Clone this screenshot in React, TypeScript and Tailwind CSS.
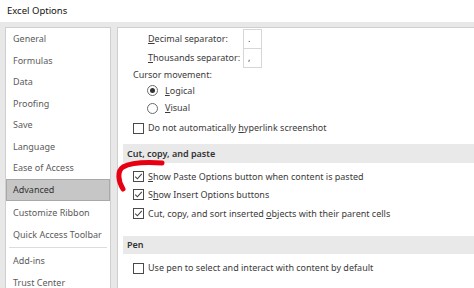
import type { JSX } from "react";

const font = { fontFamily: '"Segoe UI", "Noto Sans", "Open Sans", sans-serif' };

const navItems = [
    "General",
    "Formulas",
    "Data",
    "Proofing",
    "Save",
    "Language",
    "Ease of Access",
    "Advanced",
];

function Check({ checked }: { checked?: boolean }) {
    return (
        <span className="w-[11px] h-[11px] border border-[#4a4a4a] bg-white flex items-center justify-center shrink-0">
            {checked && (
                <svg width="9" height="9" viewBox="0 0 9 9">
                    <path d="M1.2 4.6 L3.4 6.8 L7.8 1.8" fill="none" stroke="#444" strokeWidth="1.1" />
                </svg>
            )}
        </span>
    );
}

function Radio({ selected }: { selected?: boolean }) {
    return (
        <span className="w-[11px] h-[11px] rounded-full border border-[#6a6a6a] bg-white flex items-center justify-center shrink-0">
            {selected && <span className="w-[5px] h-[5px] rounded-full bg-[#333]" />}
        </span>
    );
}

function CheckRow({ checked, h, children }: { checked?: boolean; h: string; children: JSX.Element | string }) {
    return (
        <div className={`flex items-center gap-[4px] pl-[10px] shrink-0 ${h}`}>
            <Check checked={checked} />
            <span>{children}</span>
        </div>
    );
}

function SectionBar({ title, className }: { title: string; className: string }) {
    return (
        <div className={`bg-[#e9e9e9] flex items-center pl-[4px] font-semibold text-[#333] shrink-0 ${className}`}>
            {title}
        </div>
    );
}

export default function App() {
    return (
        <div className="w-[474px] h-[288px] bg-white overflow-hidden flex flex-col relative text-[9px] whitespace-nowrap" style={font}>
            <div className="h-[22px] shrink-0 pl-[7px] flex items-center text-[9.5px] text-[#111]">Excel Options</div>

            <div className="flex-1 flex bg-[#e8e8e8] pt-[5px] pl-[5px] gap-[6px] min-h-0">
                {/* Left nav */}
                <div className="w-[106px] shrink-0 bg-white border border-[#cfcfcf] border-b-0 text-[#5b5b5b] flex flex-col overflow-hidden">
                    {navItems.map((item, i) => (
                        <div
                            key={item}
                            className={
                                item === "Advanced"
                                    ? "h-[22px] shrink-0 flex items-center pl-[6px] bg-[#c6c6c6] border border-[#a9a9a9] text-[#333]"
                                    : i % 2 === 0
                                    ? "h-[22px] shrink-0 flex items-center pl-[7px]"
                                    : "h-[21px] shrink-0 flex items-center pl-[7px]"
                            }
                        >
                            {item}
                        </div>
                    ))}
                    <div className="h-[22px] shrink-0 mt-[1px] flex items-center pl-[7px]">Customize Ribbon</div>
                    <div className="h-[22px] shrink-0 flex items-center pl-[7px]">Quick Access Toolbar</div>
                    <div className="h-px shrink-0 bg-[#dcdcdc] mx-[3px] my-[1px]" />
                    <div className="h-[22px] shrink-0 mt-[1px] flex items-center pl-[7px]">Add-ins</div>
                    <div className="h-[22px] shrink-0 flex items-center pl-[7px]">Trust Center</div>
                </div>

                {/* Right content */}
                <div className="flex-1 bg-white border-l border-t border-[#cfcfcf] text-[#3b3b3b] pl-[5px] pt-[1px] flex flex-col overflow-hidden">
                    <div className="h-[19px] shrink-0 flex items-center pl-[25px]">
                        <span className="w-[95px]"><u>D</u>ecimal separator:</span>
                        <span className="w-[19px] h-[20px] border border-[#d6d6d6] flex items-center pl-[4px]">.</span>
                    </div>
                    <div className="h-[19px] shrink-0 flex items-center pl-[25px]">
                        <span className="w-[95px]"><u>T</u>housands separator:</span>
                        <span className="w-[19px] h-[20px] border border-[#d6d6d6] flex items-center pl-[4px]">,</span>
                    </div>
                    <div className="h-[15px] shrink-0 flex items-center pl-[10px]">Cursor movement:</div>
                    <div className="h-[17px] shrink-0 flex items-center gap-[7px] pl-[24px]">
                        <Radio selected />
                        <span><u>L</u>ogical</span>
                    </div>
                    <div className="h-[18px] shrink-0 flex items-center gap-[7px] pl-[24px]">
                        <Radio />
                        <span><u>V</u>isual</span>
                    </div>
                    <div className="h-[22px] shrink-0 flex items-center gap-[4px] pl-[10px]">
                        <Check />
                        <span>Do not automatically <u>h</u>yperlink screenshot</span>
                    </div>

                    <SectionBar title="Cut, copy, and paste" className="h-[19px] mt-[5px]" />
                    <div className="pt-[4px] flex flex-col shrink-0">
                        <CheckRow checked h="h-[18.5px]">
                            <span><u>S</u>how Paste Options button when content is pasted</span>
                        </CheckRow>
                        <CheckRow checked h="h-[18.5px]">
                            <span>S<u>h</u>ow Insert Options buttons</span>
                        </CheckRow>
                        <CheckRow checked h="h-[18.5px]">
                            <span>Cut, copy, and sort inserted <u>o</u>bjects with their parent cells</span>
                        </CheckRow>
                    </div>

                    <SectionBar title="Pen" className="h-[18px] mt-[13.5px]" />
                    <div className="pt-[5px] shrink-0">
                        <CheckRow h="h-[18px]">Use pen to select and interact with content by default</CheckRow>
                    </div>
                </div>
            </div>

            {/* red annotation stroke */}
            <svg className="absolute left-0 top-0 pointer-events-none" width="474" height="288">
                <path
                    d="M162 163 C146 162 130 163 123 167 C117 171 118 181 123 189"
                    fill="none"
                    stroke="#e60012"
                    strokeWidth="5"
                    strokeLinecap="round"
                />
            </svg>
        </div>
    );
}
